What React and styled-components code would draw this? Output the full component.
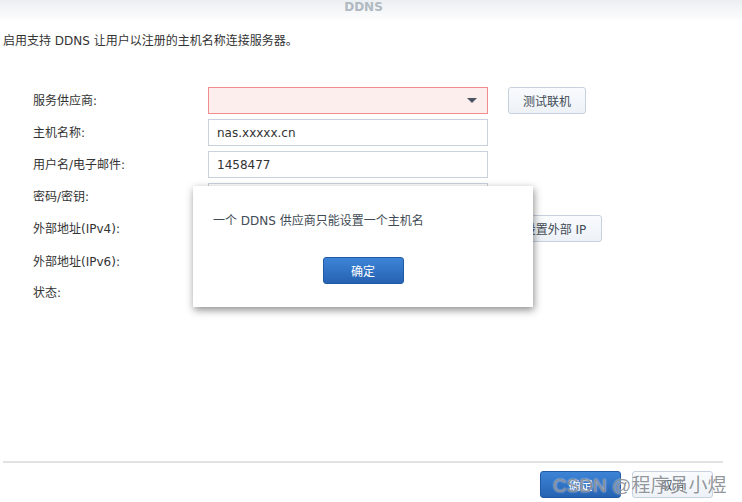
import React from "react";
import styled, { createGlobalStyle } from "styled-components";

const Global = createGlobalStyle`
  html, body { margin: 0; padding: 0; background: #fff; }
  body { font-family: "DejaVu Sans", "Noto Sans CJK SC", sans-serif; font-size: 12px; color: #333; }
  * { box-sizing: border-box; }
`;

const Page = styled.div`
  position: relative;
  width: 742px;
  height: 502px;
  display: flex;
  flex-direction: column;
  overflow: hidden;
  background: #fff;
`;

const TitleBar = styled.div`
  height: 20px;
  line-height: 14px;
  padding-right: 15px;
  text-align: center;
  font-weight: bold;
  font-size: 12px;
  color: #b0b8c2;
  background: linear-gradient(to bottom, #eceff2, #fdfdfe);
`;

const Description = styled.div`
  margin: 13px 0 0 3px;
  line-height: 16px;
  color: #333;
`;

const Content = styled.div`
  flex: 1;
`;

const Form = styled.div`
  display: grid;
  grid-template-columns: 155px 280px auto;
  grid-auto-rows: 27px;
  column-gap: 20px;
  row-gap: 5px;
  margin-top: 38px;
  padding-left: 33px;
  align-items: center;
`;

const Label = styled.div`
  grid-column: 1;
  color: #333;
  line-height: 16px;
  padding-top: ${(p) => (p.$nudge ? "2px" : "0")};
`;

const Field = styled.div`
  grid-column: 2;
  height: 27px;
  border: 1px solid ${(p) => (p.$error ? "#f28b8b" : "#c8d2dd")};
  background: ${(p) => (p.$error ? "#fdeeee" : "#fff")};
  padding-left: 8px;
  display: flex;
  align-items: center;
  justify-content: space-between;
  color: #333;
`;

const Value = styled.div`
  grid-column: 2;
  padding-left: 9px;
  color: #333;
`;

const Arrow = styled.span`
  width: 0;
  height: 0;
  margin-right: 10px;
  border-left: 5px solid transparent;
  border-right: 5px solid transparent;
  border-top: 5px solid #4b545e;
`;

const LightButton = styled.button`
  grid-column: 3;
  justify-self: start;
  height: 27px;
  width: ${(p) => p.$w || "78px"};
  padding: 0;
  border: 1px solid #c6d1dd;
  border-radius: 3px;
  background: linear-gradient(to bottom, #f9fbfd, #edf2f8);
  font-family: inherit;
  font-size: 12px;
  color: #414b55;
`;

const Footer = styled.div`
  height: 41px;
  margin: 0 19px 0 3px;
  border-top: 2px solid #e2e2e2;
  padding: 8px 10px 0 0;
  display: flex;
  justify-content: flex-end;
  gap: 11px;
`;

const BlueButton = styled.button`
  width: 81px;
  height: 27px;
  padding: 0;
  border: 1px solid #2159a4;
  border-radius: 3px;
  background: linear-gradient(to bottom, #3d84d6, #2662b2);
  color: #fff;
  font-family: inherit;
  font-size: 12px;
`;

const FooterLight = styled(LightButton)`
  width: 81px;
`;

const Dialog = styled.div`
  position: absolute;
  left: 193px;
  top: 186px;
  width: 340px;
  height: 121px;
  background: #fff;
  box-shadow: 1px 3px 8px rgba(0, 0, 0, 0.45);
  padding: 27px 20px 0 20px;
  display: flex;
  flex-direction: column;
  align-items: flex-start;
`;

const DialogText = styled.div`
  line-height: 16px;
  color: #414b55;
`;

const DialogActions = styled.div`
  align-self: stretch;
  display: flex;
  justify-content: center;
  margin-top: 28px;
`;

const Watermark = styled.div`
  position: absolute;
  left: 553px;
  top: 474px;
  font-family: "Liberation Sans", "Noto Sans CJK SC", sans-serif;
  font-size: 19px;
  line-height: 24px;
  color: rgba(128, 132, 138, 0.85);
  text-shadow: 0 0 2px rgba(255, 255, 255, 0.85);
  white-space: nowrap;
  pointer-events: none;
`;

export default function App() {
  return (
    <>
      <Global />
      <Page>
        <TitleBar>DDNS</TitleBar>
        <Content>
          <Description>启用支持 DDNS 让用户以注册的主机名称连接服务器。</Description>
          <Form>
            <Label>服务供应商:</Label>
            <Field $error>
              <span />
              <Arrow />
            </Field>
            <LightButton>测试联机</LightButton>

            <Label>主机名称:</Label>
            <Field>nas.xxxxx.cn</Field>

            <Label>用户名/电子邮件:</Label>
            <Field>1458477</Field>

            <Label>密码/密钥:</Label>
            <Field />

            <Label>外部地址(IPv4):</Label>
            <Value />
            <LightButton $w="94px">设置外部 IP</LightButton>

            <Label $nudge>外部地址(IPv6):</Label>
            <Value />

            <Label>状态:</Label>
            <Value />
          </Form>
        </Content>
        <Footer>
          <BlueButton>确定</BlueButton>
          <FooterLight>取消</FooterLight>
        </Footer>
        <Dialog>
          <DialogText>一个 DDNS 供应商只能设置一个主机名</DialogText>
          <DialogActions>
            <BlueButton>确定</BlueButton>
          </DialogActions>
        </Dialog>
        <Watermark>CSDN @程序员小煜</Watermark>
      </Page>
    </>
  );
}
